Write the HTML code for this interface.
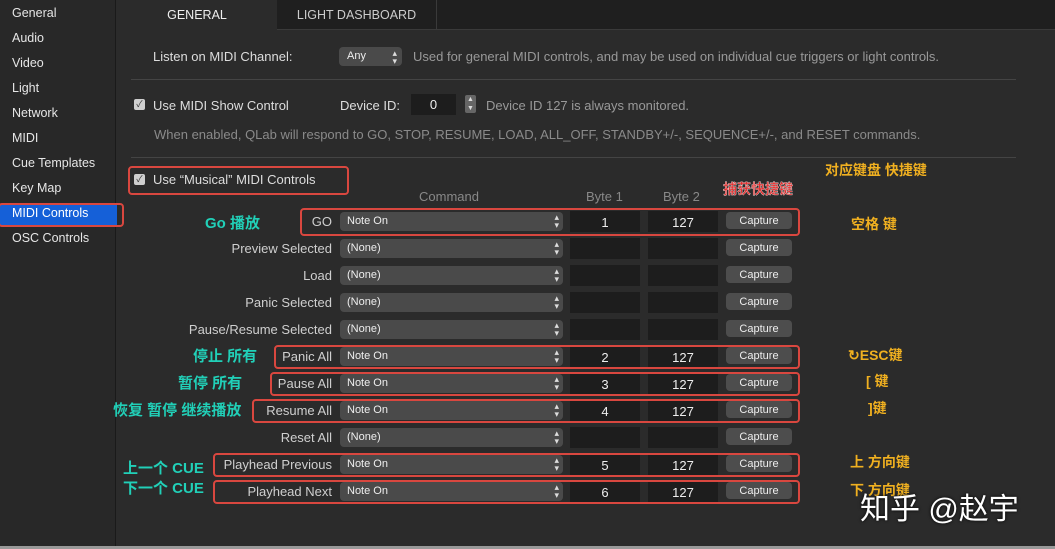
<!DOCTYPE html>
<html><head><meta charset="utf-8"><style>
*{margin:0;padding:0;box-sizing:border-box}
body{width:1055px;height:549px;background:#2b2b2b;font-family:"Liberation Sans","Noto Sans CJK SC",sans-serif;color:#ddd;position:relative;overflow:hidden;font-size:13px}
.a{position:absolute;white-space:nowrap}
.side{left:0;top:0;width:116px;height:549px;background:#282828;border-right:1px solid #1a1a1a}
.si{position:absolute;left:12px;font-size:12.5px;color:#e6e6e6}
.lbl{position:absolute;right:723px;color:#cfcfcf;font-size:13px;text-align:right}
.sel{position:absolute;left:340px;width:223px;height:19px;background:#4a4a4a;border-radius:4px;color:#eee;font-size:11px;padding:3px 0 0 7px}
.arr{position:absolute;right:4px;top:1px;font-size:9px;line-height:8px;color:#ddd;text-align:center}
.b{position:absolute;width:70px;height:21px;background:#1d1d1d;color:#eee;text-align:center;font-size:13px;padding-top:4px}
.cap{position:absolute;left:726px;width:66px;height:17px;background:#4d4d4d;border-radius:4px;color:#eee;font-size:11px;text-align:center;padding-top:3px}
.red{position:absolute;border:2px solid #d9473f;border-radius:4px}
.cy{position:absolute;color:#21d0b8;font-weight:bold;font-size:15px;white-space:nowrap}
.or{position:absolute;color:#f0b020;font-weight:bold;font-size:14px;white-space:nowrap}
.chk{position:absolute;width:11px;height:11px;background:#cfcfcf;border-radius:2px;color:#333;font-size:9px;line-height:11px;text-align:center}
</style></head><body>
<div class="a side"></div>
<div class="si" style="top:6px">General</div>
<div class="si" style="top:31px">Audio</div>
<div class="si" style="top:56px">Video</div>
<div class="si" style="top:81px">Light</div>
<div class="si" style="top:106px">Network</div>
<div class="si" style="top:131px">MIDI</div>
<div class="si" style="top:156px">Cue Templates</div>
<div class="si" style="top:181px">Key Map</div>
<div class="a" style="left:0;top:204px;width:117px;height:21px;background:#1560d8"></div>
<div class="si" style="top:206px;color:#fff">MIDI Controls</div>
<div class="red" style="left:-2px;top:203px;width:126px;height:24px"></div>
<div class="si" style="top:231px">OSC Controls</div>

<div class="a" style="left:117px;top:0;width:938px;height:30px;background:#1f1f1f;border-bottom:1px solid #3a3a3a"></div>
<div class="a" style="left:117px;top:0;width:160px;height:31px;background:#2b2b2b;text-align:center;padding-top:8px;font-size:12.5px;color:#eee">GENERAL</div>
<div class="a" style="left:277px;top:0;width:160px;height:30px;border-right:1px solid #3a3a3a;text-align:center;padding-top:8px;font-size:12.5px;color:#ccc">LIGHT DASHBOARD</div>

<div class="a" style="left:153px;top:49px;color:#ddd">Listen on MIDI Channel:</div>
<div class="a" style="left:339px;top:47px;width:63px;height:19px;background:#4a4a4a;border-radius:4px;font-size:11px;padding:3px 0 0 8px;color:#eee">Any<span class="arr" style="right:5px;top:2px">▴<br>▾</span></div>
<div class="a" style="left:413px;top:49px;color:#999">Used for general MIDI controls, and may be used on individual cue triggers or light controls.</div>
<div class="a" style="left:131px;top:79px;width:885px;height:1px;background:#444"></div>

<div class="chk" style="left:134px;top:99px">✓</div>
<div class="a" style="left:153px;top:98px">Use MIDI Show Control</div>
<div class="a" style="left:340px;top:98px">Device ID:</div>
<div class="a" style="left:411px;top:94px;width:45px;height:21px;background:#1d1d1d;text-align:center;padding-top:3px;color:#eee">0</div>
<div class="a" style="left:465px;top:95px;width:11px;height:18px;background:#666;border-radius:2px;font-size:7px;line-height:9px;text-align:center;color:#ddd">▲<br>▼</div>
<div class="a" style="left:486px;top:98px;color:#999">Device ID 127 is always monitored.</div>
<div class="a" style="left:154px;top:127px;color:#8a8a8a">When enabled, QLab will respond to GO, STOP, RESUME, LOAD, ALL_OFF, STANDBY+/-, SEQUENCE+/-, and RESET commands.</div>
<div class="a" style="left:131px;top:157px;width:885px;height:1px;background:#444"></div>

<div class="chk" style="left:134px;top:174px">✓</div>
<div class="a" style="left:153px;top:172px">Use “Musical” MIDI Controls</div>
<div class="red" style="left:128px;top:166px;width:221px;height:29px"></div>

<div class="a" style="left:419px;top:189px;color:#888">Command</div>
<div class="a" style="left:586px;top:189px;color:#888">Byte 1</div>
<div class="a" style="left:663px;top:189px;color:#888">Byte 2</div>

<div class="lbl" style="top:214px">GO</div><div class="sel" style="top:212px">Note On<span class="arr">▴<br>▾</span></div><div class="b" style="left:570px;top:211px">1</div><div class="b" style="left:648px;top:211px">127</div><div class="cap" style="top:212px">Capture</div>
<div class="lbl" style="top:241px">Preview Selected</div><div class="sel" style="top:239px">(None)<span class="arr">▴<br>▾</span></div><div class="b" style="left:570px;top:238px"></div><div class="b" style="left:648px;top:238px"></div><div class="cap" style="top:239px">Capture</div>
<div class="lbl" style="top:268px">Load</div><div class="sel" style="top:266px">(None)<span class="arr">▴<br>▾</span></div><div class="b" style="left:570px;top:265px"></div><div class="b" style="left:648px;top:265px"></div><div class="cap" style="top:266px">Capture</div>
<div class="lbl" style="top:295px">Panic Selected</div><div class="sel" style="top:293px">(None)<span class="arr">▴<br>▾</span></div><div class="b" style="left:570px;top:292px"></div><div class="b" style="left:648px;top:292px"></div><div class="cap" style="top:293px">Capture</div>
<div class="lbl" style="top:322px">Pause/Resume Selected</div><div class="sel" style="top:320px">(None)<span class="arr">▴<br>▾</span></div><div class="b" style="left:570px;top:319px"></div><div class="b" style="left:648px;top:319px"></div><div class="cap" style="top:320px">Capture</div>
<div class="lbl" style="top:349px">Panic All</div><div class="sel" style="top:347px">Note On<span class="arr">▴<br>▾</span></div><div class="b" style="left:570px;top:346px">2</div><div class="b" style="left:648px;top:346px">127</div><div class="cap" style="top:347px">Capture</div>
<div class="lbl" style="top:376px">Pause All</div><div class="sel" style="top:374px">Note On<span class="arr">▴<br>▾</span></div><div class="b" style="left:570px;top:373px">3</div><div class="b" style="left:648px;top:373px">127</div><div class="cap" style="top:374px">Capture</div>
<div class="lbl" style="top:403px">Resume All</div><div class="sel" style="top:401px">Note On<span class="arr">▴<br>▾</span></div><div class="b" style="left:570px;top:400px">4</div><div class="b" style="left:648px;top:400px">127</div><div class="cap" style="top:401px">Capture</div>
<div class="lbl" style="top:430px">Reset All</div><div class="sel" style="top:428px">(None)<span class="arr">▴<br>▾</span></div><div class="b" style="left:570px;top:427px"></div><div class="b" style="left:648px;top:427px"></div><div class="cap" style="top:428px">Capture</div>
<div class="lbl" style="top:457px">Playhead Previous</div><div class="sel" style="top:455px">Note On<span class="arr">▴<br>▾</span></div><div class="b" style="left:570px;top:454px">5</div><div class="b" style="left:648px;top:454px">127</div><div class="cap" style="top:455px">Capture</div>
<div class="lbl" style="top:484px">Playhead Next</div><div class="sel" style="top:482px">Note On<span class="arr">▴<br>▾</span></div><div class="b" style="left:570px;top:481px">6</div><div class="b" style="left:648px;top:481px">127</div><div class="cap" style="top:482px">Capture</div>

<div class="red" style="left:300px;top:208px;width:500px;height:28px"></div>
<div class="red" style="left:274px;top:345px;width:526px;height:24px"></div>
<div class="red" style="left:270px;top:372px;width:530px;height:24px"></div>
<div class="red" style="left:252px;top:399px;width:548px;height:24px"></div>
<div class="red" style="left:213px;top:453px;width:587px;height:24px"></div>
<div class="red" style="left:213px;top:480px;width:587px;height:24px"></div>

<div class="cy" style="left:205px;top:212px">Go 播放</div>
<div class="cy" style="left:193px;top:345px">停止 所有</div>
<div class="cy" style="left:178px;top:372px">暂停 所有</div>
<div class="cy" style="left:113px;top:399px">恢复 暂停 继续播放</div>
<div class="cy" style="left:123px;top:457px">上一个 CUE</div>
<div class="cy" style="left:123px;top:477px">下一个 CUE</div>

<div class="a" style="left:723px;top:179px;color:#e03030;font-weight:bold;font-size:14px;-webkit-text-stroke:0.3px #fff">捕获快捷键</div>
<div class="or" style="left:825px;top:160px">对应键盘 快捷键</div>
<div class="or" style="left:851px;top:214px">空格 键</div>
<div class="or" style="left:848px;top:345px">↻ESC键</div>
<div class="or" style="left:866px;top:371px">[ 键</div>
<div class="or" style="left:868px;top:398px">]键</div>
<div class="or" style="left:850px;top:452px">上 方向键</div>
<div class="or" style="left:850px;top:480px">下 方向键</div>
<div class="a" style="left:860px;top:484px;color:#fff;font-size:30px;text-shadow:0 0 3px #000">知乎 @赵宇</div>
<div class="a" style="left:0;top:546px;width:1055px;height:3px;background:#999"></div>
</body></html>
